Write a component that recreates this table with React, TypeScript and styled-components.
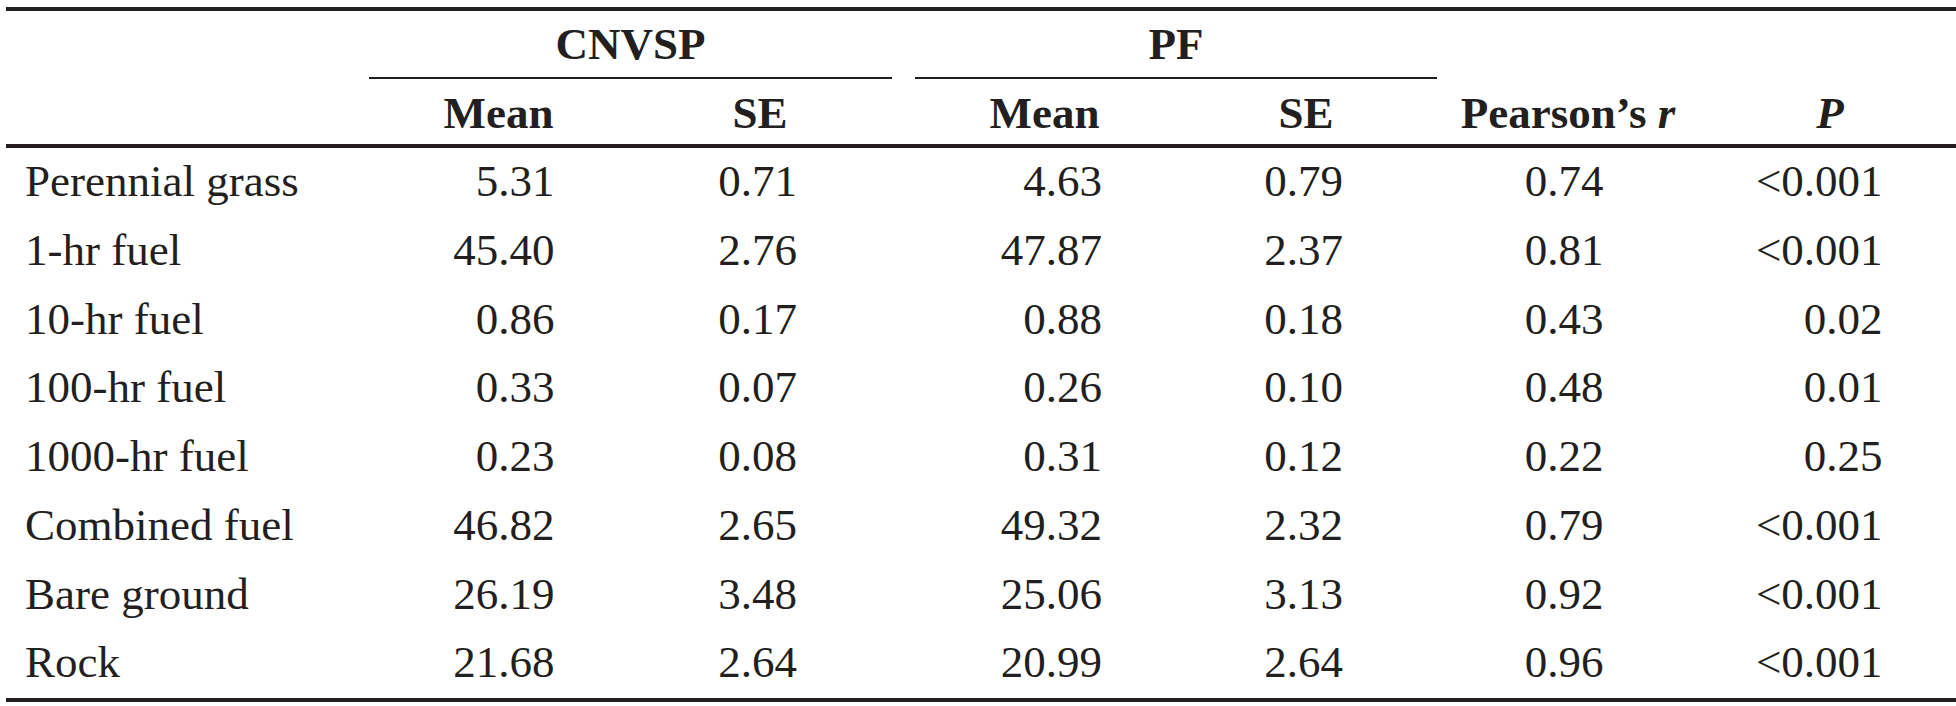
import React from "react";
import styled, { createGlobalStyle } from "styled-components";

const Global = createGlobalStyle`
  html, body { margin: 0; padding: 0; background: #ffffff; overflow: hidden; }
  body { font-family: "Liberation Serif", "Times New Roman", serif; color: #231f20; }
`;

const INK = "#231f20";

type ColSpec = {
  width: number;
  dataPad: number; // padding-right for data cells
  headLeft: number; // header shift
  headRight: number;
};

const COLS: ColSpec[] = [
  { width: 351.5, dataPad: 0, headLeft: 0, headRight: 0 },
  { width: 273, dataPad: 76, headLeft: 9, headRight: 0 },
  { width: 273, dataPad: 106.5, headLeft: 0, headRight: 14 },
  { width: 272.5, dataPad: 74, headLeft: 9.5, headRight: 0 },
  { width: 272.5, dataPad: 105.5, headLeft: 0, headRight: 12.5 },
  { width: 251.5, dataPad: 96.5, headLeft: 0, headRight: 12.5 },
  { width: 256, dataPad: 73.5, headLeft: 4, headRight: 0 },
];

const Table = styled.table`
  margin: 7px 0 0 6px;
  width: 1950px;
  table-layout: fixed;
  border-collapse: separate;
  border-spacing: 0;
  border-top: 4px solid ${INK};
  border-bottom: 4px solid ${INK};
  font-family: "Liberation Serif", "Times New Roman", serif;
  font-size: 45px;
  color: ${INK};
`;

const Col = styled.col<{ $w: number }>`
  width: ${(p) => p.$w}px;
`;

const SpanHead = styled.th`
  padding: 8px 11.5px 0;
  font-weight: 700;
  line-height: 50px;
  text-align: center;
  vertical-align: top;
`;

const SpanLabel = styled.div`
  padding-bottom: 8px;
  border-bottom: 2px solid ${INK};
`;

const SubHead = styled.th<{ $l: number; $r: number }>`
  padding: 8.7px ${(p) => p.$r}px 6.3px ${(p) => p.$l}px;
  font-weight: 700;
  line-height: 50px;
  text-align: center;
  vertical-align: bottom;
  border-bottom: 4px solid ${INK};
  white-space: nowrap;
`;

const StubHead = styled.th`
  border-bottom: 4px solid ${INK};
`;

const Ital = styled.em`
  font-style: italic;
  font-weight: 700;
`;

const StubCell = styled.td`
  padding: 8.3px 0 10.45px 19px;
  line-height: 50px;
  text-align: left;
  white-space: nowrap;
`;

const NumCell = styled.td<{ $r: number }>`
  padding: 8.3px ${(p) => p.$r}px 10.45px 0;
  line-height: 50px;
  text-align: right;
  white-space: nowrap;
`;

const ROWS: string[][] = [
  ["Perennial grass", "5.31", "0.71", "4.63", "0.79", "0.74", "<0.001"],
  ["1-hr fuel", "45.40", "2.76", "47.87", "2.37", "0.81", "<0.001"],
  ["10-hr fuel", "0.86", "0.17", "0.88", "0.18", "0.43", "0.02"],
  ["100-hr fuel", "0.33", "0.07", "0.26", "0.10", "0.48", "0.01"],
  ["1000-hr fuel", "0.23", "0.08", "0.31", "0.12", "0.22", "0.25"],
  ["Combined fuel", "46.82", "2.65", "49.32", "2.32", "0.79", "<0.001"],
  ["Bare ground", "26.19", "3.48", "25.06", "3.13", "0.92", "<0.001"],
  ["Rock", "21.68", "2.64", "20.99", "2.64", "0.96", "<0.001"],
];

export default function App() {
  return (
    <>
      <Global />
      <Table>
        <colgroup>
          {COLS.map((c, i) => (
            <Col key={i} $w={c.width} />
          ))}
        </colgroup>
        <thead>
          <tr>
            <StubHead rowSpan={2} />
            <SpanHead colSpan={2}>
              <SpanLabel>CNVSP</SpanLabel>
            </SpanHead>
            <SpanHead colSpan={2}>
              <SpanLabel>PF</SpanLabel>
            </SpanHead>
            <SubHead rowSpan={2} $l={COLS[5].headLeft} $r={COLS[5].headRight}>
              Pearson’s <Ital>r</Ital>
            </SubHead>
            <SubHead rowSpan={2} $l={COLS[6].headLeft} $r={COLS[6].headRight}>
              <Ital>P</Ital>
            </SubHead>
          </tr>
          <tr>
            <SubHead $l={COLS[1].headLeft} $r={COLS[1].headRight}>Mean</SubHead>
            <SubHead $l={COLS[2].headLeft} $r={COLS[2].headRight}>SE</SubHead>
            <SubHead $l={COLS[3].headLeft} $r={COLS[3].headRight}>Mean</SubHead>
            <SubHead $l={COLS[4].headLeft} $r={COLS[4].headRight}>SE</SubHead>
          </tr>
        </thead>
        <tbody>
          {ROWS.map((row) => (
            <tr key={row[0]}>
              <StubCell>{row[0]}</StubCell>
              {row.slice(1).map((v, i) => (
                <NumCell key={i} $r={COLS[i + 1].dataPad}>
                  {v}
                </NumCell>
              ))}
            </tr>
          ))}
        </tbody>
      </Table>
    </>
  );
}
